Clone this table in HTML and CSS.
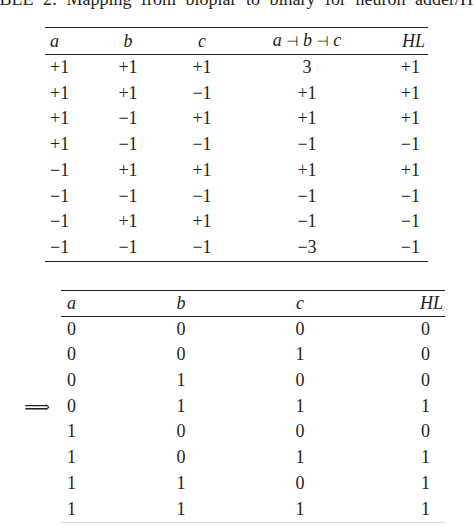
FILE: index.html
```html
<!DOCTYPE html>
<html lang="en">
<head>
<meta charset="utf-8">
<title>Table 2</title>
<link rel="stylesheet" href="styles.css">
</head>
<body>
<p class="caption">TABLE 2: Mapping from bioplar to binary for neuron adder/HL.</p>

<table class="tbl bipolar">
  <colgroup>
    <col class="w-a1"><col class="w-b1"><col class="w-c1"><col class="w-d1"><col class="w-h1">
  </colgroup>
  <thead>
    <tr><th class="left">a</th><th>b</th><th>c</th><th>a <span class="tack">⊣</span> b <span class="tack">⊣</span> c</th><th class="right">HL</th></tr>
  </thead>
  <tbody>
    <tr><td class="left">+1</td><td>+1</td><td>+1</td><td>3</td><td class="right">+1</td></tr>
    <tr><td class="left">+1</td><td>+1</td><td>−1</td><td>+1</td><td class="right">+1</td></tr>
    <tr><td class="left">+1</td><td>−1</td><td>+1</td><td>+1</td><td class="right">+1</td></tr>
    <tr><td class="left">+1</td><td>−1</td><td>−1</td><td>−1</td><td class="right">−1</td></tr>
    <tr><td class="left">−1</td><td>+1</td><td>+1</td><td>+1</td><td class="right">+1</td></tr>
    <tr><td class="left">−1</td><td>−1</td><td>−1</td><td>−1</td><td class="right">−1</td></tr>
    <tr><td class="left">−1</td><td>+1</td><td>+1</td><td>−1</td><td class="right">−1</td></tr>
    <tr><td class="left">−1</td><td>−1</td><td>−1</td><td>−3</td><td class="right">−1</td></tr>
  </tbody>
</table>

<table class="tbl binary">
  <colgroup>
    <col class="w-arrow"><col class="w-a2"><col class="w-b2"><col class="w-c2"><col class="w-h2">
  </colgroup>
  <thead>
    <tr><th class="arrow"></th><th class="left">a</th><th>b</th><th>c</th><th class="right">HL</th></tr>
  </thead>
  <tbody>
    <tr><td class="arrow"></td><td class="left">0</td><td>0</td><td>0</td><td class="right">0</td></tr>
    <tr><td class="arrow"></td><td class="left">0</td><td>0</td><td>1</td><td class="right">0</td></tr>
    <tr><td class="arrow"></td><td class="left">0</td><td>1</td><td>0</td><td class="right">0</td></tr>
    <tr><td class="arrow">⟹</td><td class="left">0</td><td>1</td><td>1</td><td class="right">1</td></tr>
    <tr><td class="arrow"></td><td class="left">1</td><td>0</td><td>0</td><td class="right">0</td></tr>
    <tr><td class="arrow"></td><td class="left">1</td><td>0</td><td>1</td><td class="right">1</td></tr>
    <tr><td class="arrow"></td><td class="left">1</td><td>1</td><td>0</td><td class="right">1</td></tr>
    <tr><td class="arrow"></td><td class="left">1</td><td>1</td><td>1</td><td class="right">1</td></tr>
  </tbody>
</table>
</body>
</html>
```

FILE: styles.css
```css
html, body {
  margin: 0;
  padding: 0;
  background: #ffffff;
}

body {
  width: 474px;
  height: 526px;
  overflow: hidden;
  font-family: "Liberation Serif", "DejaVu Serif", serif;
  color: #231f20;
}

.caption {
  margin: -10px 0 0 -23px;
  font-size: 18px;
  line-height: 18px;
  white-space: nowrap;
  word-spacing: 5px;
}

.tbl {
  border-collapse: collapse;
  table-layout: fixed;
  font-size: 18px;
}

.tbl th,
.tbl td {
  padding: 0;
  text-align: center;
  font-weight: normal;
  white-space: nowrap;
}

.tbl th {
  height: 25px;
  line-height: 25px;
  font-style: italic;
  border-top: 1px solid #222;
  border-bottom: 1px solid #222;
}

.tbl td {
  height: 25.7px;
  line-height: 25.7px;
}

.tbl tbody tr:last-child td {
  border-bottom: 1px solid #222;
}

.tbl .left {
  text-align: left;
}

.tbl .right {
  text-align: right;
}

.tack {
  font-style: normal;
  font-family: "DejaVu Sans", sans-serif;
  font-size: 14px;
}

/* Bipolar table */
.bipolar {
  width: 383px;
  margin: 19px 0 0 45px;
}

.w-a1 { width: 45px; }
.w-b1 { width: 76px; }
.w-c1 { width: 72px; }
.w-d1 { width: 138px; }
.w-h1 { width: 52px; }

.bipolar .left { padding-left: 5px; }
.bipolar th.right { padding-right: 3px; }
.bipolar td.right { padding-right: 8px; }

/* Binary table */
.binary {
  width: 445px;
  margin: 28px 0 0 0;
}

.w-arrow { width: 61px; }
.w-a2 { width: 60px; }
.w-b2 { width: 120px; }
.w-c2 { width: 118px; }
.w-h2 { width: 86px; }

.binary .left { padding-left: 6px; }
.binary th.right { padding-right: 2px; }
.binary td.right { padding-right: 15px; }

.binary th.arrow,
.binary td.arrow {
  border: none;
}

.binary tbody tr:last-child td {
  border-bottom-color: #d4d4d4;
}

.binary tbody tr:last-child td.arrow {
  border-bottom: none;
}

.binary td.arrow {
  text-align: right;
  padding-right: 11px;
  font-family: "DejaVu Serif", serif;
  font-size: 18px;
}
```
